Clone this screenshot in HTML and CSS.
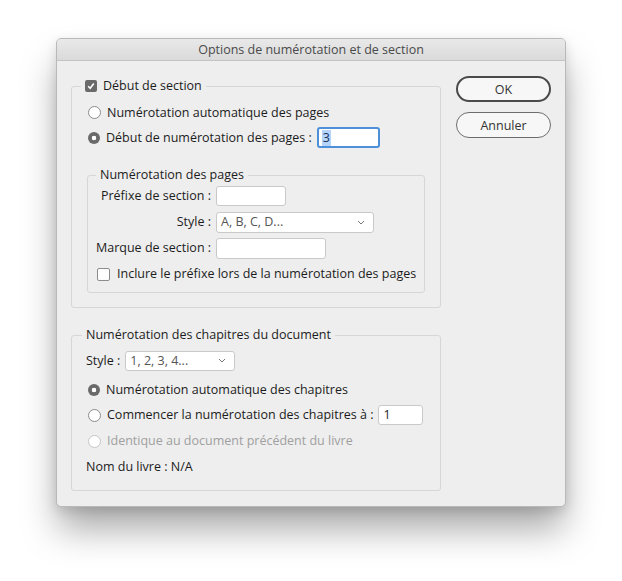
FILE: index.html
```html
<!DOCTYPE html>
<html lang="fr">
<head>
    <meta charset="UTF-8">
    <title>Options de numérotation et de section</title>
    <link rel="stylesheet" href="styles.css">
</head>
<body>
    <div class="screen">
        <div class="window">
            <div class="titlebar">Options de numérotation et de section</div>

            <div class="content">
                <div class="main">
                    <!-- Section start -->
                    <fieldset class="group section-group">
                        <legend class="legend-check">
                            <span class="check checked">
                                <svg width="8" height="8" viewBox="0 0 8 8"><polyline points="1.2,4.2 3.2,6.2 6.8,1.6" fill="none" stroke="#fff" stroke-width="1.6"/></svg>
                            </span>
                            Début de section
                        </legend>

                        <div class="row opt">
                            <span class="radio"></span>
                            Numérotation automatique des pages
                        </div>
                        <div class="row opt">
                            <span class="radio checked"></span>
                            Début de numérotation des pages :
                            <span class="input focused w-start"><span class="sel">3</span></span>
                        </div>

                        <fieldset class="group inner">
                            <legend>Numérotation des pages</legend>
                            <div class="row field">
                                <span class="label">Préfixe de section :</span>
                                <span class="input w-prefix"></span>
                            </div>
                            <div class="row field">
                                <span class="label">Style :</span>
                                <span class="select w-style">A, B, C, D...
                                    <svg class="chev" width="8" height="5" viewBox="0 0 8 5"><polyline points="1,1 4,4 7,1" fill="none" stroke="#777" stroke-width="1"/></svg>
                                </span>
                            </div>
                            <div class="row field">
                                <span class="label">Marque de section :</span>
                                <span class="input w-mark"></span>
                            </div>
                            <div class="row field check-row">
                                <span class="check"></span>
                                Inclure le préfixe lors de la numérotation des pages
                            </div>
                        </fieldset>
                    </fieldset>

                    <!-- Chapter numbering -->
                    <fieldset class="group chapter-group">
                        <legend>Numérotation des chapitres du document</legend>
                        <div class="row style-row">
                            Style :
                            <span class="select w-chap">1, 2, 3, 4...
                                <svg class="chev" width="8" height="5" viewBox="0 0 8 5"><polyline points="1,1 4,4 7,1" fill="none" stroke="#777" stroke-width="1"/></svg>
                            </span>
                        </div>
                        <div class="row opt first-opt">
                            <span class="radio checked"></span>
                            Numérotation automatique des chapitres
                        </div>
                        <div class="row opt tall">
                            <span class="radio"></span>
                            Commencer la numérotation des chapitres à :
                            <span class="input w-chapnum">1</span>
                        </div>
                        <div class="row opt tall disabled">
                            <span class="radio"></span>
                            Identique au document précédent du livre
                        </div>
                        <div class="row tall book">Nom du livre : N/A</div>
                    </fieldset>
                </div>

                <div class="buttons">
                    <button class="btn default">OK</button>
                    <button class="btn">Annuler</button>
                </div>
            </div>
        </div>
    </div>
</body>
</html>
```

FILE: styles.css
```css
body {
    margin: 0;
    background-color: #ffffff;
    font-family: 'Open Sans', 'Liberation Sans', sans-serif;
    font-size: 12.5px;
    line-height: 16px;
    color: #1c1c1c;
}

.screen {
    padding: 38px 0 74px 56px;
}

.window {
    width: 510px;
    height: 469px;
    box-sizing: border-box;
    background-color: #eeeeee;
    border: 1px solid #b9b9b9;
    border-radius: 5px;
    box-shadow: 0 24px 36px -2px rgba(0, 0, 0, 0.34), 0 4px 12px rgba(0, 0, 0, 0.12);
    overflow: hidden;
}

.titlebar {
    height: 21px;
    line-height: 21px;
    text-align: center;
    color: #4a4a4a;
    background: linear-gradient(#e9e9e9, #dadada);
    border-bottom: 1px solid #c4c4c4;
}

.content {
    display: flex;
    gap: 15px;
    padding: 15px 14px 0 14px;
}

.main {
    width: 370px;
    margin-top: 2px;
    display: flex;
    flex-direction: column;
}

/* Group boxes */
.group {
    margin: 0;
    min-width: 0;
    border: 1px solid #d6d6d6;
    border-radius: 3px;
}

.group legend {
    padding: 0 4px;
    line-height: 16px;
}

.section-group {
    padding: 6px 15px 14px 15px;
}

.section-group > legend {
    margin-left: -6px;
}

.legend-check {
    display: flex;
    align-items: center;
    gap: 6px;
}

.inner {
    margin-top: 17px;
    padding: 0 14px 5px 8px;
}

.chapter-group {
    margin-top: 19px;
    padding: 5px 15px 10px 15px;
}

.chapter-group > legend {
    margin-left: -5px;
}

/* Rows */
.row {
    display: flex;
    align-items: center;
    height: 25px;
    white-space: nowrap;
}

.opt {
    gap: 6px;
    padding-left: 1px;
}

.field {
    height: 26px;
    gap: 5px;
}

.label {
    width: 115px;
    text-align: right;
}

.check-row {
    gap: 7px;
    padding-left: 1px;
}

.style-row {
    gap: 5px;
    margin-left: -1px;
}

.first-opt {
    margin-top: 4px;
}

.tall {
    height: 26px;
}

.book {
    margin-left: -1px;
}

.disabled {
    color: #a0a0a0;
}

/* Controls */
.radio {
    width: 11px;
    height: 11px;
    border: 1px solid #8c8c8c;
    border-radius: 50%;
    background-color: #ffffff;
    box-sizing: content-box;
    flex-shrink: 0;
}

.radio.checked {
    width: 12px;
    height: 12px;
    border: 0;
    background: radial-gradient(circle, #ffffff 0 2px, #6a6a6a 2.6px);
}

.disabled .radio {
    border-color: #c6c6c6;
}

.check {
    width: 11px;
    height: 11px;
    border: 1px solid #8c8c8c;
    border-radius: 2px;
    background-color: #ffffff;
    display: flex;
    align-items: center;
    justify-content: center;
    flex-shrink: 0;
}

.check.checked {
    width: 12px;
    height: 12px;
    border: 0;
    background-color: #6a6a6a;
}

.input,
.select {
    border: 1px solid #c9c9c9;
    border-radius: 3px;
    background-color: #ffffff;
    display: flex;
    align-items: center;
    padding: 0 4px;
    box-sizing: border-box;
    height: 21px;
}

.input.focused {
    border: 2px solid #4d8fd8;
    padding-left: 3px;
    margin-left: -1px;
    color: #15305a;
}

.sel {
    background-color: #b5d4fb;
    padding: 0 1px;
    line-height: 16px;
}

.select {
    justify-content: space-between;
    color: #555555;
    padding-right: 8px;
}

.chev {
    flex-shrink: 0;
}

.w-start { width: 63px; }
.w-prefix { width: 70px; height: 20px; }
.w-style { width: 158px; }
.w-mark { width: 110px; }
.w-chap { width: 110px; height: 20px; }
.w-chapnum { width: 45px; height: 20px; margin-left: -1px; }

/* Buttons */
.buttons {
    display: flex;
    flex-direction: column;
    gap: 10px;
}

.btn {
    width: 95px;
    height: 26px;
    border: 1px solid #6d6d6d;
    border-radius: 13px;
    background-color: #f7f7f7;
    font-family: inherit;
    font-size: 12.5px;
    color: #333333;
    padding: 0;
}

.btn.default {
    border: 2px solid #4a4a4a;
}
```
